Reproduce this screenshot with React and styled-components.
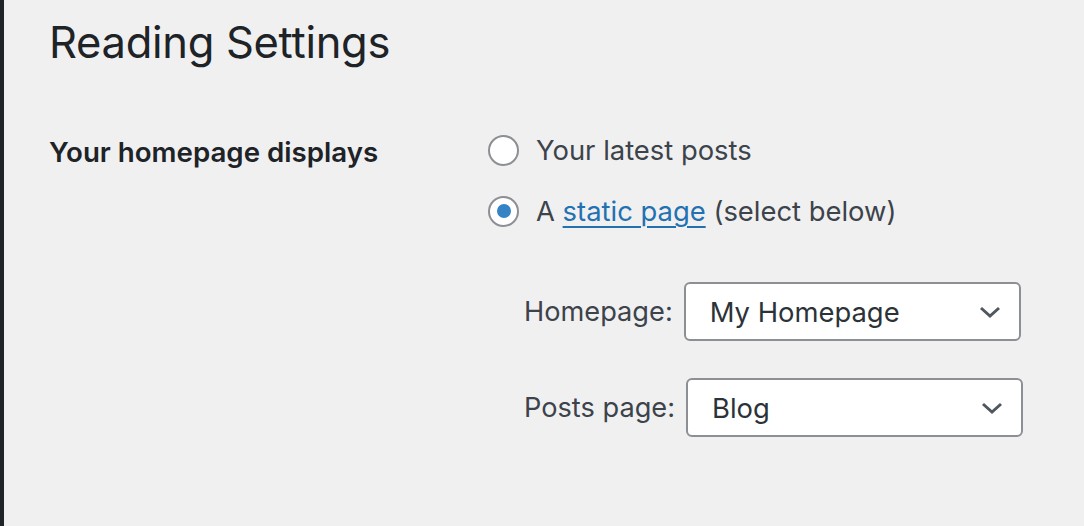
import React from 'react';
import styled, { createGlobalStyle } from 'styled-components';

const Global = createGlobalStyle`
  html, body {
    margin: 0;
    padding: 0;
    background: #f0f0f1;
    font-family: Inter, "Liberation Sans", sans-serif;
    color: #1d2327;
  }
`;

const Page = styled.div`
  display: flex;
  min-height: 526px;
`;

const SideEdge = styled.div`
  width: 4px;
  background: #1d2327;
  flex-shrink: 0;
`;

const Main = styled.main`
  flex: 1;
  padding: 15px 0 0 45px;
`;

const Title = styled.h1`
  margin: 0;
  font-size: 43.5px;
  font-weight: 400;
  line-height: 54px;
  letter-spacing: -0.3px;
`;

const Row = styled.div`
  display: grid;
  grid-template-columns: 439px 1fr;
  margin-top: 66px;
`;

const RowLabel = styled.div`
  font-size: 27.7px;
  font-weight: 600;
  line-height: 34px;
`;

const Options = styled.div`
  display: flex;
  flex-direction: column;
  margin-top: -2px;
`;

const RadioLine = styled.label`
  display: flex;
  align-items: center;
  gap: 17px;
  height: 34px;
  margin-bottom: 27px;
  font-size: 27.4px;
  color: #3c434a;
`;

const RadioCircle = styled.span`
  width: 31px;
  height: 31px;
  border-radius: 50%;
  border: 2px solid #8c8f94;
  background: #fff;
  box-sizing: border-box;
  display: flex;
  align-items: center;
  justify-content: center;
  &::after {
    content: '';
    display: ${p => (p.$checked ? 'block' : 'none')};
    width: 14px;
    height: 14px;
    border-radius: 50%;
    background: #3582c4;
  }
`;

const TextLink = styled.a`
  color: #2271b1;
  text-decoration: underline;
  text-underline-offset: 5px;
  text-decoration-thickness: 2px;
`;

const Pickers = styled.div`
  display: flex;
  flex-direction: column;
  gap: 37px;
  padding-left: 36px;
  margin-top: 27px;
`;

const PickerRow = styled.div`
  display: flex;
  align-items: center;
  gap: ${p => p.$gap}px;
`;

const PickerLabel = styled.span`
  font-size: 27.2px;
  color: #3c434a;
`;

const Select = styled.div`
  width: 337px;
  height: 59px;
  box-sizing: border-box;
  border: 2px solid #8c8f94;
  border-radius: 6px;
  background: #fff;
  display: flex;
  align-items: center;
  justify-content: space-between;
  padding: 0 18px 0 24px;
  font-size: 27.4px;
  color: #2c3338;
`;

const Chevron = () => (
  <svg width="22" height="14" viewBox="0 0 22 14">
    <path d="M2 3 L11 11 L20 3" fill="none" stroke="#50575e" strokeWidth="3" />
  </svg>
);

export default function App() {
  return (
    <>
      <Global />
      <Page>
        <SideEdge />
        <Main>
          <Title>Reading Settings</Title>
          <Row>
            <RowLabel>Your homepage displays</RowLabel>
            <Options>
              <RadioLine>
                <RadioCircle />
                Your latest posts
              </RadioLine>
              <RadioLine>
                <RadioCircle $checked />
                <span>
                  A <TextLink href="#">static page</TextLink> (select below)
                </span>
              </RadioLine>
              <Pickers>
                <PickerRow $gap={11}>
                  <PickerLabel>Homepage:</PickerLabel>
                  <Select>
                    My Homepage
                    <Chevron />
                  </Select>
                </PickerRow>
                <PickerRow $gap={11}>
                  <PickerLabel>Posts page:</PickerLabel>
                  <Select>
                    Blog
                    <Chevron />
                  </Select>
                </PickerRow>
              </Pickers>
            </Options>
          </Row>
        </Main>
      </Page>
    </>
  );
}
